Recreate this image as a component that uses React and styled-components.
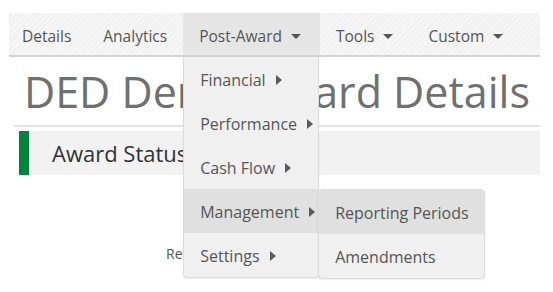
import React from "react";
import styled, { createGlobalStyle } from "styled-components";

const GlobalStyle = createGlobalStyle`
  html, body {
    margin: 0;
    padding: 0;
    background: #fff;
    font-family: "Open Sans", "Liberation Sans", sans-serif;
  }
`;

const Page = styled.div`
  width: 553px;
  height: 292px;
  overflow: hidden;
  padding: 13px 13px 0 9px;
  box-sizing: border-box;
`;

const NavBar = styled.nav`
  display: flex;
  height: 42px;
  border-bottom: 2px solid #d4d4d4;
  background-color: #f2f2f2;
  background-image: repeating-linear-gradient(
    135deg,
    rgba(255, 255, 255, 0.55) 0px,
    rgba(255, 255, 255, 0.55) 1px,
    transparent 1px,
    transparent 4px
  );
`;

const NavItem = styled.div`
  position: relative;
  display: flex;
  align-items: center;
  gap: 9px;
  padding: 3px ${({ dropdown }) => (dropdown ? "19px" : "16px")} 0 16px;
  font-size: 15.5px;
  color: #555;
  background: ${({ active }) => (active ? "#e6e6e6" : "transparent")};
  &:first-child {
    padding-left: 13px;
  }
`;

const DownCaret = styled.span`
  width: 0;
  height: 0;
  border-left: 5px solid transparent;
  border-right: 5px solid transparent;
  border-top: 5px solid #555;
  margin-top: 2px;
`;

const RightCaret = styled.span`
  width: 0;
  height: 0;
  border-top: 5px solid transparent;
  border-bottom: 5px solid transparent;
  border-left: 6px solid #5a5a5a;
`;

const Menu = styled.div`
  position: absolute;
  top: 44px;
  left: 0;
  width: 134px;
  background: #f0f0f0;
  border: 1px solid #dcdcdc;
  border-top: none;
  border-radius: 0 0 4px 4px;
  box-shadow: 0 1px 2px rgba(0, 0, 0, 0.08);
  z-index: 10;
`;

const MenuItem = styled.div`
  position: relative;
  display: flex;
  align-items: center;
  gap: 10px;
  height: 44px;
  padding: 1px 16px 0;
  box-sizing: border-box;
  font-size: 16px;
  color: #555;
  white-space: nowrap;
  background: ${({ active }) => (active ? "#e0e0e0" : "transparent")};
`;

const SubMenu = styled.div`
  position: absolute;
  top: 0;
  left: 134px;
  width: 165px;
  background: #f0f0f0;
  border: 1px solid #dcdcdc;
  border-radius: 4px;
  box-shadow: 0 1px 2px rgba(0, 0, 0, 0.08);
  overflow: hidden;
`;

const Title = styled.h1`
  margin: 0;
  padding: 8px 0 0 15px;
  height: 61px;
  box-sizing: border-box;
  font-weight: 400;
  font-size: 43px;
  line-height: 54px;
  color: #707070;
  white-space: nowrap;
`;

const Rule = styled.hr`
  margin: 7px 0 0 5px;
  border: none;
  border-top: 2px solid #e3e3e3;
`;

const Panel = styled.div`
  display: flex;
  align-items: center;
  margin: 4px 0 0 10px;
  height: 44px;
  background: #f2f2f2;
  border-left: 10px solid #00843d;
  padding-left: 23px;
  font-size: 22px;
  color: #333;
`;

const Note = styled.div`
  margin-top: 69px;
  padding-left: 157px;
  font-size: 14px;
  color: #555;
`;

const menuItems = ["Financial", "Performance", "Cash Flow", "Management", "Settings"];

export default function App() {
  return (
    <>
      <GlobalStyle />
      <Page>
        <NavBar>
          <NavItem>Details</NavItem>
          <NavItem>Analytics</NavItem>
          <NavItem active dropdown>
            Post-Award <DownCaret />
            <Menu>
              {menuItems.map((label) => (
                <MenuItem key={label} active={label === "Management"}>
                  {label} <RightCaret />
                  {label === "Management" ? (
                    <SubMenu>
                      <MenuItem active>Reporting Periods</MenuItem>
                      <MenuItem>Amendments</MenuItem>
                    </SubMenu>
                  ) : null}
                </MenuItem>
              ))}
            </Menu>
          </NavItem>
          <NavItem dropdown>
            Tools <DownCaret />
          </NavItem>
          <NavItem dropdown>
            Custom <DownCaret />
          </NavItem>
        </NavBar>
        <Title>DED Demo Award Details</Title>
        <Rule />
        <Panel>Award Status</Panel>
        <Note>Reports not available.</Note>
      </Page>
    </>
  );
}
